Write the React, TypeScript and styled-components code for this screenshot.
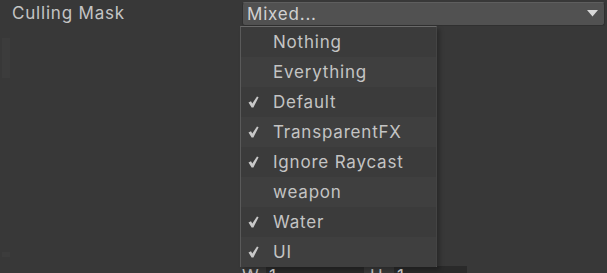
import React from 'react';
import styled, { createGlobalStyle } from 'styled-components';

const GlobalStyle = createGlobalStyle`
  html, body {
    margin: 0;
    padding: 0;
    background: #383838;
    font-family: Inter, "Noto Sans", sans-serif;
    color: #c4c4c4;
    overflow: hidden;
  }
`;

const Inspector = styled.div`
  position: relative;
  width: 607px;
  height: 273px;
  background: #383838;
  letter-spacing: 0.8px;
`;

const PropertyRow = styled.div`
  display: flex;
  align-items: center;
  height: 26px;
  padding: 0 2px 0 12px;
`;

const Label = styled.div`
  width: 230px;
  font-size: 17px;
  line-height: 24px;
  color: #c4c4c4;
`;

const DropdownField = styled.div`
  flex: 1;
  display: flex;
  align-items: center;
  justify-content: space-between;
  height: 24px;
  margin-top: 1px;
  padding: 0 6px 0 4px;
  background: #515151;
  border: 1px solid #303030;
  border-top-color: #5e5e5e;
  border-radius: 3px;
  box-sizing: border-box;
  font-size: 17px;
  color: #d2d2d2;
`;

const Spacer = styled.div`
  height: 240px;
  position: relative;
`;

const ScrollStub = styled.div<{ $top: number; $height: number }>`
  position: absolute;
  left: 2px;
  top: ${(p) => p.$top}px;
  width: 8px;
  height: ${(p) => p.$height}px;
  background: #3c3c3c;
`;

const SizeRow = styled.div`
  display: flex;
  align-items: flex-start;
  gap: 6px;
  padding-left: 242px;
  font-size: 17px;
  line-height: 20px;
`;

const SizeLabel = styled.span`
  width: 18px;
`;

const SizeInput = styled.div<{ $w: number }>`
  width: ${(p) => p.$w}px;
  height: 18px;
  background: #2a2a2a;
  padding-left: 3px;
  color: #d2d2d2;
`;

const Popup = styled.div`
  position: absolute;
  left: 240px;
  top: 26px;
  width: 197px;
  height: 241px;
  box-sizing: border-box;
  background: #3c3c3c;
  border: 1px solid #5a5a5a;
  border-top-color: #6a6a6a;
  border-right-color: #444;
  box-shadow: 3px 3px 4px rgba(0, 0, 0, 0.25);
  display: flex;
  flex-direction: column;
`;

const Item = styled.div<{ $alt: boolean }>`
  display: flex;
  align-items: center;
  height: 30px;
  flex-shrink: 0;
  background: ${(p) => (p.$alt ? '#3f3f3f' : '#3b3b3b')};
  font-size: 17px;
  color: #c4c4c4;
`;

const CheckSlot = styled.div`
  width: 32px;
  display: flex;
  justify-content: center;
  padding-right: 8px;
  box-sizing: border-box;
`;

const Check = () => (
  <svg width="11" height="12" viewBox="0 0 11 12">
    <path
      d="M0.5 6.5 L3 5.2 L4.3 7.6 L9 0.5 L10.6 1.2 L5.4 11.5 L3.6 11.5 Z"
      fill="#c8c8c8"
    />
  </svg>
);

const Arrow = () => (
  <svg width="11" height="7" viewBox="0 0 11 7">
    <path d="M0 0 H11 L5.5 6.5 Z" fill="#d8d8d8" />
  </svg>
);

const layers = [
  { name: 'Nothing', on: false },
  { name: 'Everything', on: false },
  { name: 'Default', on: true },
  { name: 'TransparentFX', on: true },
  { name: 'Ignore Raycast', on: true },
  { name: 'weapon', on: false },
  { name: 'Water', on: true },
  { name: 'UI', on: true },
];

export default function App() {
  return (
    <>
      <GlobalStyle />
      <Inspector>
        <PropertyRow>
          <Label>Culling Mask</Label>
          <DropdownField>
            <span>Mixed...</span>
            <Arrow />
          </DropdownField>
        </PropertyRow>
        <Spacer>
          <ScrollStub $top={12} $height={40} />
          <ScrollStub $top={226} $height={5} />
        </Spacer>
        <SizeRow>
          <SizeLabel>W</SizeLabel>
          <SizeInput $w={95}>1</SizeInput>
          <SizeLabel>H</SizeLabel>
          <SizeInput $w={70}>1</SizeInput>
        </SizeRow>
        <Popup>
          {layers.map((l, i) => (
            <Item key={l.name} $alt={i % 2 === 1}>
              <CheckSlot>{l.on && <Check />}</CheckSlot>
              {l.name}
            </Item>
          ))}
        </Popup>
      </Inspector>
    </>
  );
}
